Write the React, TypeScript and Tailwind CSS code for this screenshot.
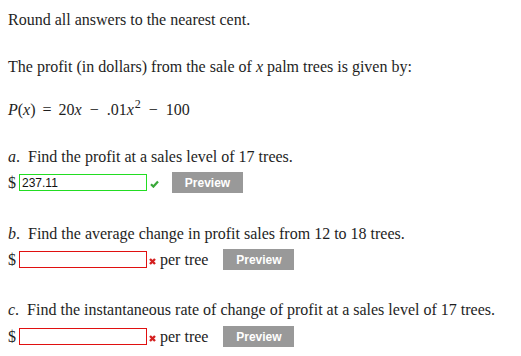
import React from "react";

const serif = { fontFamily: '"Liberation Serif", "Times New Roman", serif' };

function Check() {
  return (
    <svg width="9" height="8" viewBox="0 0 9 8" className="ml-[3px] mt-[3px]" aria-hidden="true">
      <path d="M1 4.2 L3.4 6.6 L8 1.4" fill="none" stroke="#3aa83a" strokeWidth="2.2" />
    </svg>
  );
}

function Cross() {
  return (
    <svg width="7" height="7" viewBox="0 0 7 7" className="ml-[2px] mt-[3px]" aria-hidden="true">
      <path d="M1 1 L6 6 M6 1 L1 6" fill="none" stroke="#d42020" strokeWidth="2.4" />
    </svg>
  );
}

function PreviewButton({ className }: { className?: string }) {
  return (
    <button
      className={`h-[21px] w-[71px] bg-[#999999] text-white text-[12px] font-bold leading-none ${className ?? ""}`}
      style={{ fontFamily: '"Liberation Sans", Arial, sans-serif' }}
    >
      Preview
    </button>
  );
}

function AnswerRow({
  value,
  ok,
  unit,
  className,
}: {
  value?: string;
  ok: boolean;
  unit?: string;
  className?: string;
}) {
  return (
    <div className={`flex items-center h-[21px] ${className ?? ""}`}>
      <span className="text-[16px] leading-none text-[#222] w-[11px]">$</span>
      <div
        className={`h-[17px] w-[128px] border ${ok ? "border-[#22dd22]" : "border-[#e01010]"} flex items-center px-[2px] text-[12px] text-[#111]`}
        style={{ fontFamily: '"Liberation Sans", Arial, sans-serif' }}
      >
        {value}
      </div>
      {ok ? <Check /> : <Cross />}
      {unit && <span className="ml-[4px] text-[16px] text-[#222]">{unit}</span>}
      <PreviewButton className={ok ? "ml-[13px]" : "ml-[15px]"} />
    </div>
  );
}

export default function App() {
  return (
    <div className="w-[521px] h-[356px] bg-white pl-[8px] pt-[10px] text-[#1e1e1e]" style={serif}>
      <p className="text-[16px] leading-[20px]">Round all answers to the nearest cent.</p>
      <p className="text-[16px] leading-[20px] mt-[27px]">
        The profit (in dollars) from the sale of <i>x</i> palm trees is given by:
      </p>
      <p className="text-[16px] leading-[20px] mt-[23px]">
        <i>P</i>(<i>x</i>)<span className="mx-[7px]">=</span>20<i>x</i>
        <span className="mx-[8px]">−</span>.01<i>x</i>
        <sup className="text-[12px] top-[-7px] ml-[1px]">2</sup>
        <span className="mx-[8px]">−</span>100
      </p>
      <p className="text-[16px] leading-[20px] mt-[27px]">
        <i>a</i>.&nbsp; Find the profit at a sales level of 17 trees.
      </p>
      <AnswerRow value="237.11" ok className="mt-[5px]" />
      <p className="text-[16px] leading-[20px] mt-[31px]">
        <i>b</i>.&nbsp; Find the average change in profit sales from 12 to 18 trees.
      </p>
      <AnswerRow ok={false} unit="per tree" className="mt-[5px]" />
      <p className="text-[16px] leading-[20px] mt-[30px]">
        <i>c</i>.&nbsp; Find the instantaneous rate of change of profit at a sales level of 17 trees.
      </p>
      <AnswerRow ok={false} unit="per tree" className="mt-[6px]" />
    </div>
  );
}
